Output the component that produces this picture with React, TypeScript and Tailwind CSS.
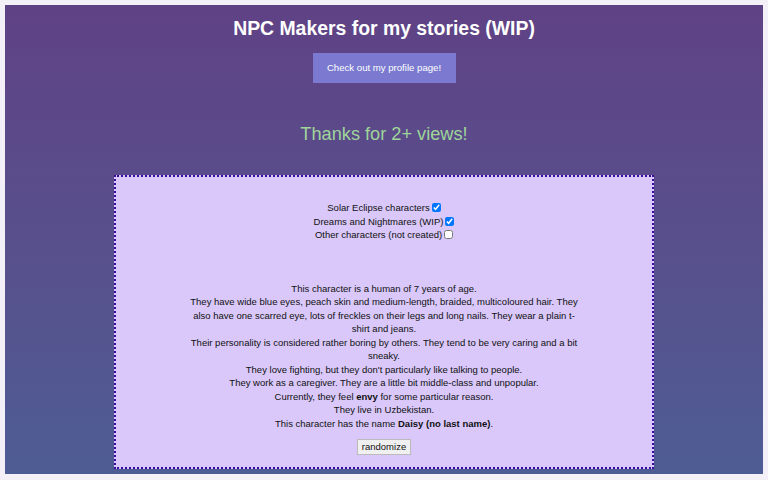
export default function App() {
  const font = { fontFamily: '"Liberation Sans", Arial, sans-serif' };
  return (
    <div className="bg-[#f4f0f8] p-[5px] min-h-[480px]" style={font}>
      <div className="bg-gradient-to-b from-[#5f4285] to-[#4e5c94] h-[469px] flex flex-col items-center">
        <h1 className="text-white font-bold text-[19.4px] leading-[23px] mt-[12px]">
          NPC Makers for my stories (WIP)
        </h1>
        <button className="mt-[13px] w-[143px] h-[30px] bg-[#7b7ad0] text-white text-[9.6px]">
          Check out my profile page!
        </button>
        <p className="mt-[40px] text-[#9fd59a] text-[18.2px] leading-[22px]">Thanks for 2+ views!</p>
        <div className="mt-[30px] mb-[5px] w-[540px] flex-1 bg-[#d9c8f9] border-2 border-dotted border-[#3a0ba0] text-[9.5px] leading-[13.5px] text-[#111] text-center flex flex-col items-center">
          <div className="mt-[24px] flex flex-col items-center">
            <label className="flex items-center gap-[2px]">
              Solar Eclipse characters
              <input type="checkbox" defaultChecked className="w-[9px] h-[9px] m-0" />
            </label>
            <label className="flex items-center gap-[2px]">
              Dreams and Nightmares (WIP)
              <input type="checkbox" defaultChecked className="w-[9px] h-[9px] m-0" />
            </label>
            <label className="flex items-center gap-[2px]">
              Other characters (not created)
              <input type="checkbox" className="w-[9px] h-[9px] m-0" />
            </label>
          </div>
          <div className="mt-[40px] w-[396px]">
            <p>This character is a human of 7 years of age.</p>
            <p>
              They have wide blue eyes, peach skin and medium-length, braided, multicoloured hair. They also have
              one scarred eye, lots of freckles on their legs and long nails. They wear a plain t-shirt and jeans.
            </p>
            <p>Their personality is considered rather boring by others. They tend to be very caring and a bit sneaky.</p>
            <p>They love fighting, but they don't particularly like talking to people.</p>
            <p>They work as a caregiver. They are a little bit middle-class and unpopular.</p>
            <p>
              Currently, they feel <b>envy</b> for some particular reason.
            </p>
            <p>They live in Uzbekistan.</p>
            <p>
              This character has the name <b>Daisy (no last name)</b>.
            </p>
          </div>
          <button className="mt-[9px] px-[4px] h-[16px] text-[9.5px] leading-[14px] bg-[#f0f0f0] border border-[#bbb] text-[#111]">
            randomize
          </button>
        </div>
      </div>
    </div>
  );
}
